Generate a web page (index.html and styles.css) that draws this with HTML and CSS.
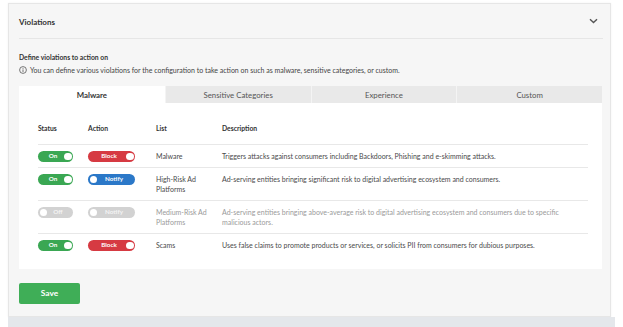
FILE: index.html
```html
<!DOCTYPE html>
<html>
<head>
<meta charset="utf-8">
<link rel="stylesheet" href="styles.css">
</head>
<body>
<div class="panel">
  <div class="panel-head">
    <span class="panel-title">Violations</span>
    <svg class="chev" width="9" height="6" viewBox="0 0 9 6"><path d="M1 1.2 L4.5 4.6 L8 1.2" fill="none" stroke="#555" stroke-width="1.4"/></svg>
  </div>
  <div class="panel-body">
    <div class="sub-title">Define violations to action on</div>
    <div class="info">
      <svg class="info-icon" width="8" height="8" viewBox="0 0 8 8"><circle cx="4" cy="4" r="3.4" fill="none" stroke="#555" stroke-width="0.8"/><rect x="3.6" y="3.4" width="0.8" height="2.6" fill="#555"/><rect x="3.6" y="2" width="0.8" height="0.8" fill="#555"/></svg>
      <span>You can define various violations for the configuration to take action on such as malware, sensitive categories, or custom.</span>
    </div>
    <div class="card">
      <div class="tabs">
        <div class="tab active">Malware</div>
        <div class="tab">Sensitive Categories</div>
        <div class="tab">Experience</div>
        <div class="tab">Custom</div>
      </div>
      <table class="vtable">
        <thead>
          <tr><th class="c-status">Status</th><th class="c-action">Action</th><th class="c-list">List</th><th>Description</th></tr>
        </thead>
        <tbody>
          <tr>
            <td><span class="sw sw-on green"><span class="lbl">On</span><span class="knob"></span></span></td>
            <td><span class="sw sw-wide red"><span class="lbl">Block</span><span class="knob"></span></span></td>
            <td>Malware</td>
            <td>Triggers attacks against consumers including Backdoors, Phishing and e-skimming attacks.</td>
          </tr>
          <tr>
            <td><span class="sw sw-on green"><span class="lbl">On</span><span class="knob"></span></span></td>
            <td><span class="sw sw-wide blue left"><span class="knob"></span><span class="lbl">Notify</span></span></td>
            <td>High-Risk Ad Platforms</td>
            <td>Ad-serving entities bringing significant risk to digital advertising ecosystem and consumers.</td>
          </tr>
          <tr class="disabled">
            <td><span class="sw sw-on grey left"><span class="knob"></span><span class="lbl">Off</span></span></td>
            <td><span class="sw sw-wide grey left"><span class="knob"></span><span class="lbl">Notify</span></span></td>
            <td>Medium-Risk Ad Platforms</td>
            <td>Ad-serving entities bringing above-average risk to digital advertising ecosystem and consumers due to specific malicious actors.</td>
          </tr>
          <tr class="last">
            <td><span class="sw sw-on green"><span class="lbl">On</span><span class="knob"></span></span></td>
            <td><span class="sw sw-wide red"><span class="lbl">Block</span><span class="knob"></span></span></td>
            <td>Scams</td>
            <td>Uses false claims to promote products or services, or solicits PII from consumers for dubious purposes.</td>
          </tr>
        </tbody>
      </table>
    </div>
    <button class="save">Save</button>
  </div>
</div>
<div class="bottom-strip"></div>
</body>
</html>
```
FILE: styles.css
```css
* { box-sizing: border-box; }
html, body { margin: 0; padding: 0; }
body {
  background: #fff;
  font-family: Lato, "Liberation Sans", sans-serif;
  color: #444;
  width: 623px;
  height: 327px;
  overflow: hidden;
  padding-top: 3px;
}
.panel {
  margin-left: 8px;
  width: 603px;
  height: 314px;
  background: #f6f6f6;
  border: 1px solid #e6e6e6;
  box-shadow: 0 0 2px rgba(0,0,0,0.06);
}
.panel-head {
  height: 35px;
  margin: 0 7px 0 10px;
  border-bottom: 1px solid #e6e6e6;
  display: flex;
  align-items: center;
  justify-content: space-between;
}
.panel-title {
  font-size: 8px;
  font-weight: 700;
  color: #333;
  padding-top: 1px;
}
.chev { margin-right: 5px; }
.panel-body {
  padding: 13px 8px 0 10px;
}
.sub-title {
  font-size: 6.8px;
  font-weight: 700;
  color: #333;
  line-height: 10px;
}
.info {
  display: flex;
  align-items: center;
  gap: 3px;
  font-size: 7px;
  color: #444;
  line-height: 10px;
  margin-top: 3px;
}
.card {
  margin-top: 11px;
  width: 583px;
  background: #fff;
  padding-bottom: 13px;
}
.tabs {
  display: grid;
  grid-template-columns: repeat(4, 1fr);
  height: 17px;
}
.tab {
  background: #e9e9e9;
  font-size: 7.8px;
  color: #555;
  display: flex;
  align-items: center;
  justify-content: center;
  border-left: 1px solid #f4f4f4;
}
.tab.active {
  background: #fff;
  font-weight: 700;
  color: #333;
  border-left: none;
}
.vtable {
  margin: 9px 14px 0 19px;
  width: 550px;
  border-collapse: collapse;
  font-size: 7px;
}
.vtable th {
  text-align: left;
  font-weight: 700;
  color: #333;
  height: 32px;
  vertical-align: middle;
  padding: 0;
  border-bottom: 1px solid #e8e8e8;
  font-size: 6.8px;
}
.c-status { width: 50px; }
.c-action { width: 68px; }
.c-list { width: 66px; }
.vtable td {
  vertical-align: top;
  padding: 6px 10px 5px 0;
  line-height: 10.5px;
  border-bottom: 1px solid #e8e8e8;
  color: #4a4a4a;
}
.vtable td:nth-child(3) { padding-right: 12px; }
.vtable tr.last td { border-bottom: none; }
.vtable tr.disabled td { color: #9a9a9a; }
.sw {
  display: inline-flex;
  align-items: center;
  justify-content: space-between;
  height: 10.5px;
  border-radius: 6px;
  padding: 0 1.5px 0 0;
  color: #fff;
  font-size: 6.3px;
  font-weight: 700;
  vertical-align: top;
  margin-top: 0.5px;
}
.sw.left { padding: 0 0 0 1.5px; }
.sw-on { width: 35px; }
.sw-wide { width: 47px; }
.sw .lbl { flex: 1; text-align: center; padding-left: 4px; }
.sw.left .lbl { padding-left: 0; padding-right: 4px; }
.knob {
  width: 7.5px;
  height: 7.5px;
  border-radius: 50%;
  background: #fff;
  flex: none;
}
.green { background: #3aa753; }
.red { background: #d63a42; }
.blue { background: #2b78c8; }
.grey { background: #d2d2d2; color: #f4f4f4; }
.save {
  margin-top: 14px;
  width: 61px;
  height: 21px;
  border: none;
  border-radius: 2px;
  background: #3fae57;
  color: #fff;
  font-family: Lato, "Liberation Sans", sans-serif;
  font-size: 8.4px;
  font-weight: 700;
  padding: 0;
}
.bottom-strip {
  margin-left: 8px;
  width: 607px;
  height: 10px;
  background: #e4e7eb;
}
```
